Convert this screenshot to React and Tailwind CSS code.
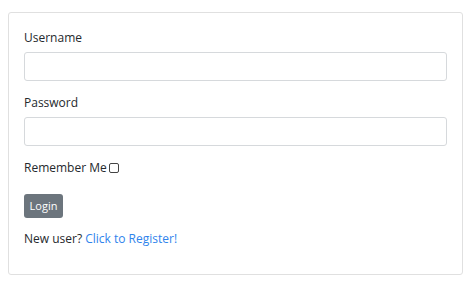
import React, { useState } from "react";

function App() {
  const [remember, setRemember] = useState(false);

  return (
    <div className="min-h-screen w-full bg-white pt-[12px] pl-[8px] pr-[11px] font-['Open_Sans',sans-serif] text-[12px] leading-[19px] text-[#25292d]">
      <div className="w-[455px] h-[263px] border border-[#e0e0e0] rounded-[3px] px-[15px] pt-[15px]">
        <form onSubmit={(e) => e.preventDefault()}>
          {/* Username */}
          <div className="mb-[12px]">
            <label className="block mb-[5px]">Username</label>
            <input
              type="text"
              className="block w-full h-[29px] px-[9px] rounded-[3px] border border-[#d6d9dc] bg-white focus:outline-none"
            />
          </div>

          {/* Password */}
          <div className="mb-[12px]">
            <label className="block mb-[5px]">Password</label>
            <input
              type="password"
              className="block w-full h-[29px] px-[9px] rounded-[3px] border border-[#d6d9dc] bg-white focus:outline-none"
            />
          </div>

          {/* Remember */}
          <div className="flex items-center mb-[17px]">
            <span>Remember Me</span>
            <input
              type="checkbox"
              checked={remember}
              onChange={(e) => setRemember(e.target.checked)}
              className="appearance-none ml-[2px] w-[10px] h-[10px] border border-[#444] rounded-[2px] bg-white"
            />
          </div>

          <button
            type="submit"
            className="block h-[24px] w-[39px] rounded-[3px] bg-[#6c757d] text-white text-[11px] leading-[24px]"
          >
            Login
          </button>

          <p className="mt-[11px]">
            New user? <a className="text-[#2f84ec] cursor-pointer">Click to Register!</a>
          </p>
        </form>
      </div>
    </div>
  );
}

export default App;
